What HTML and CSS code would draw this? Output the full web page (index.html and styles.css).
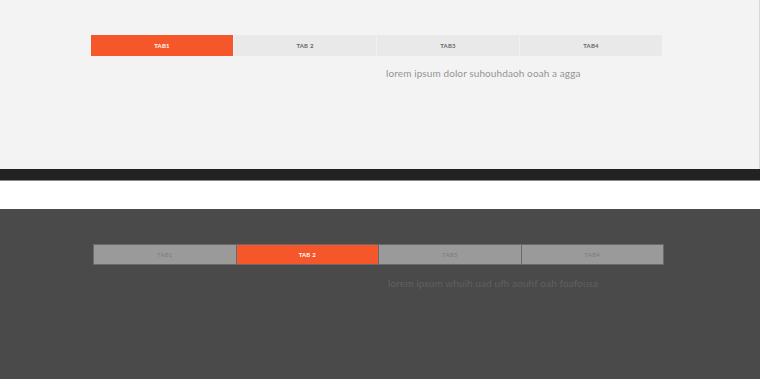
FILE: index.html
```html
<!DOCTYPE html>
<html lang="en">
<head>
  <meta charset="UTF-8">
  <title>Tabs</title>
  <link rel="stylesheet" href="styles.css">
</head>
<body>

  <section class="demo light">
    <div class="tabs">
      <div class="tab active">TAB1</div>
      <div class="tab">TAB 2</div>
      <div class="tab">TAB3</div>
      <div class="tab">TAB4</div>
    </div>
    <p class="panel">lorem ipsum dolor suhouhdaoh ooah a agga</p>
  </section>

  <div class="band"></div>
  <div class="gap"></div>

  <section class="demo dark">
    <div class="tabs">
      <div class="tab">TAB1</div>
      <div class="tab active">TAB 2</div>
      <div class="tab">TAB3</div>
      <div class="tab">TAB4</div>
    </div>
    <p class="panel">lorem ipsum whuih uad ufh aouhf oah foafousa</p>
  </section>

</body>
</html>
```

FILE: styles.css
```css
body {
  margin: 0;
  font-family: 'Lato', 'Noto Sans', sans-serif;
  background: #fff;
}

.demo {
  height: 169px;
  box-sizing: border-box;
  padding-top: 35px;
}

.light {
  background: #f3f3f3;
  padding-left: 91px;
  border-right: 1px solid #d8d8d8;
}

.dark {
  background: #4a4a4a;
  height: 170px;
  padding-left: 93px;
}

.band {
  height: 11px;
  background: #222;
  border-bottom: 1px solid #8a8a8a;
}

.gap {
  height: 28px;
}

.tabs {
  display: flex;
  width: 571px;
  height: 21px;
}

.tab {
  flex: 1;
  display: flex;
  align-items: center;
  justify-content: center;
  font-size: 6px;
  font-weight: 700;
  letter-spacing: 0.2px;
}

.light .tab {
  background: #e9e9e9;
  color: #666;
  border-left: 1px solid #f1f1f1;
}

.light .tab:first-child {
  border-left: none;
}

.dark .tab {
  background: #9a9a9a;
  color: #7c7c7c;
  font-weight: 400;
  border: 1px solid #6a6a6a;
  border-left: none;
}

.dark .tab:first-child {
  border-left: 1px solid #6a6a6a;
}

.tab.active,
.dark .tab.active {
  background: #f5572a;
  color: #fff;
  font-weight: 700;
}

.panel {
  margin: 10px 0 0 295px;
  font-size: 10px;
  line-height: 14px;
  letter-spacing: 0.1px;
}

.light .panel {
  color: #939393;
}

.dark .panel {
  margin-top: 11px;
  color: #606060;
}
```
